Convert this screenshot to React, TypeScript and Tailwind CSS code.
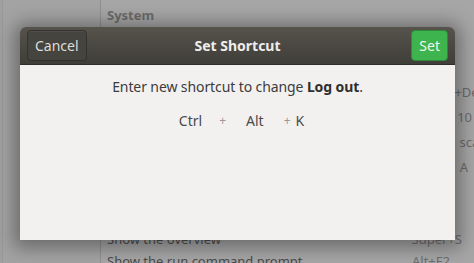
export default function App() {
  const font = { fontFamily: '"Noto Sans", "Open Sans", sans-serif' };
  return (
    <div className="relative h-[263px] w-[474px] overflow-hidden bg-[#a4a4a4]" style={font}>
      {/* background settings window, dimmed */}
      <div className="flex h-full">
        <div className="w-[3px] shrink-0 border-r border-[#989898] bg-[#a0a0a0]" />
        <div className="w-[98px] shrink-0 border-r border-[#8f8f8f] bg-[#a3a3a3]" />
        <div className="flex min-w-0 flex-1 flex-col overflow-hidden bg-[#a6a6a6] text-[13px] text-[#6a6a6a]">
          <div className="h-[32px] shrink-0 pl-[6px] pt-[6px] font-bold text-[#6b6b6b]">System</div>
          <div className="flex h-[196px] shrink-0 flex-col items-end pt-[48px] leading-[25px]">
            <span className="mr-[-8px]">+Del</span>
            <span className="mr-[2px]">10</span>
            <span className="mr-[-16px]">scale</span>
            <span className="mr-[6px]">A</span>
          </div>
          <div className="flex h-[22px] shrink-0 items-center justify-between pl-[6px] pr-[12px] leading-[22px] text-[#4e4e4e]">
            <span>Show the overview</span>
            <span className="text-[#6e6e6e]">Super+S</span>
          </div>
          <div className="flex h-[22px] shrink-0 items-center justify-between pl-[6px] pr-[24px] leading-[22px] text-[#4a4a4a]">
            <span>Show the run command prompt</span>
            <span className="text-[#6e6e6e]">Alt+F2</span>
          </div>
        </div>
      </div>

      {/* modal dialog */}
      <div className="absolute left-[20px] top-[27px] flex h-[213px] w-[435px] flex-col overflow-hidden rounded-t-[6px] shadow-[0_2px_18px_6px_rgba(0,0,0,0.35)]">
        <div className="relative flex h-[38px] shrink-0 items-center justify-between border-b border-[#2e2d29] bg-gradient-to-b from-[#56534c] to-[#403e39] px-[7px]">
          <button className="h-[31px] rounded-[4px] border border-[#34322e] bg-[#46443e] px-[7px] text-[14px] text-[#dedcd8] shadow-[inset_0_1px_0_rgba(255,255,255,0.06)]">
            Cancel
          </button>
          <span className="pointer-events-none absolute left-0 right-0 text-center text-[14px] font-bold text-[#efedea]">
            Set Shortcut
          </span>
          <button className="relative h-[31px] rounded-[4px] border border-[#2c8a3a] bg-[#3db44d] px-[7px] text-[14px] text-[#eef8ee]">
            Set
          </button>
        </div>
        <div className="flex flex-1 flex-col items-center bg-[#f2f1f0] pt-[11px] text-[14px] text-[#3c3c3c]">
          <p className="tracking-[-0.1px]">
            Enter new shortcut to change <b className="font-bold text-[#2e2e2e]">Log out</b>.
          </p>
          <div className="mt-[13px] flex items-center text-[#4a4a4a]">
            <span className="ml-[8px]">Ctrl</span>
            <span className="ml-[17px] text-[12px] text-[#9a9a9a]">+</span>
            <span className="ml-[20px]">Alt</span>
            <span className="ml-[20px] text-[12px] text-[#9a9a9a]">+</span>
            <span className="ml-[5px]">K</span>
          </div>
        </div>
      </div>
    </div>
  );
}
